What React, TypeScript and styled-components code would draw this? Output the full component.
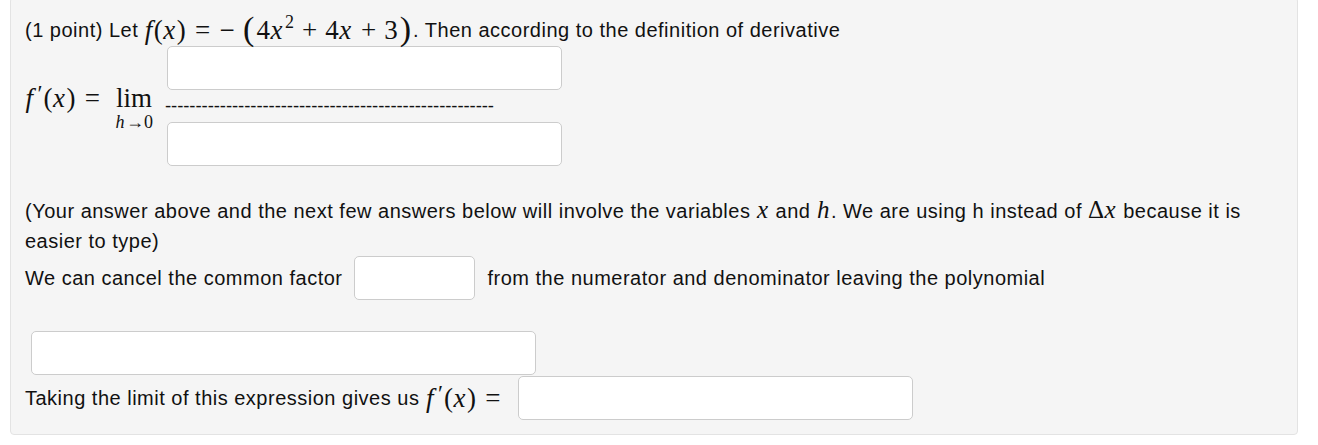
import React from "react";
import styled, { createGlobalStyle } from "styled-components";

const Global = createGlobalStyle`
  html, body { margin: 0; padding: 0; background: #ffffff; }
  body { font-family: "Liberation Sans", Arial, sans-serif; color: #111; }
`;

const Panel = styled.div`
  box-sizing: border-box;
  margin: -3px 0 0 10px;
  width: 1288px;
  background: #f5f5f5;
  border: 1px solid #e3e3e3;
  border-radius: 4px;
  padding: 17px 14px 14px 14px;
  font-size: 20px;
  letter-spacing: 0.5px;
  line-height: 30px;
`;

const Line = styled.div<{ h?: number }>`
  display: flex;
  align-items: center;
  white-space: nowrap;
  min-height: ${(p) => (p.h ? `${p.h}px` : "30px")};
`;

const Para = styled.div<{ mt?: number }>`
  margin-top: ${(p) => p.mt ?? 0}px;
  line-height: 30px;
`;

const M = styled.span<{ size?: number }>`
  font-family: "Liberation Serif", "DejaVu Serif", serif;
  font-size: ${(p) => p.size ?? 27}px;
  line-height: 1;
  letter-spacing: 0;
  white-space: nowrap;
`;

const InlineM = styled(M)`
  display: inline-block;
  margin: 0 6px;
`;

const V = styled.i`
  font-style: italic;
  padding: 0 1.5px 0 0.5px;
`;

const Op = styled.span<{ sp?: number }>`
  margin: 0 ${(p) => p.sp ?? 0.34}em;
`;

const Big = styled.span`
  font-size: 34px;
  line-height: 0;
  position: relative;
  top: 1px;
  margin: 0 2px;
`;

const Sup = styled.sup`
  font-size: 18px;
  line-height: 0;
  vertical-align: 0.6em;
  margin-left: 1px;
`;

const Prime = styled.span`
  font-size: 0.85em;
  position: relative;
  top: -0.25em;
  margin: 0 1px 0 3px;
`;

const Input = styled.div<{ w: number; ml?: number; mr?: number }>`
  box-sizing: border-box;
  flex: none;
  width: ${(p) => p.w}px;
  height: 44px;
  margin-left: ${(p) => p.ml ?? 0}px;
  margin-right: ${(p) => p.mr ?? 0}px;
  background: #ffffff;
  border: 1px solid #cccccc;
  border-radius: 5px;
`;

const FracRow = styled.div`
  display: flex;
  align-items: center;
  margin-top: 1px;
`;

const Label = styled.div`
  display: flex;
  align-items: baseline;
  margin-top: 4px;
  width: 142px;
  flex: none;
`;

const LimStack = styled.span`
  display: inline-flex;
  flex-direction: column;
  align-items: center;
  margin-left: 0.3em;
  line-height: 22px;
`;

const LimSub = styled.span`
  line-height: 16px;
  margin-top: 1px;
`;

const FracCol = styled.div`
  display: flex;
  flex-direction: column;
`;

const Dashes = styled.div`
  height: 32px;
  line-height: 32px;
  font-size: 18.6px;
  letter-spacing: -0.1px;
  white-space: nowrap;
  margin-left: -2px;
`;

const Gap = styled.div<{ h: number }>`
  height: ${(p) => p.h}px;
`;

export default function App() {
  return (
    <>
      <Global />
      <Panel>
        <Line>
          (1 point) Let&nbsp;
          <M>
            <V>f</V>(<V>x</V>)<Op>=</Op>−<Op sp={0.12} />
            <Big>(</Big>4<V>x</V>
            <Sup>2</Sup>
            <Op sp={0.3}>+</Op>4<V>x</V>
            <Op sp={0.3}>+</Op>3<Big>)</Big>
          </M>
          . Then according to the definition of derivative
        </Line>
        <FracRow>
          <Label>
            <M>
              <V>f</V>
              <Prime>′</Prime>(<V>x</V>)<Op>=</Op>
            </M>
            <LimStack>
              <M>lim</M>
              <LimSub>
                <M size={18}>
                  <V>h</V>→0
                </M>
              </LimSub>
            </LimStack>
          </Label>
          <FracCol>
            <Input w={395} />
            <Dashes>{"-".repeat(54)}</Dashes>
            <Input w={395} />
          </FracCol>
        </FracRow>
        <Para mt={30}>
          (Your answer above and the next few answers below will involve the variables
          <InlineM size={25}>
            <V>x</V>
          </InlineM>
          and
          <InlineM size={25} style={{ marginRight: 0 }}>
            <V>h</V>
          </InlineM>
          . We are using h instead of
          <InlineM size={25}>
            Δ<V>x</V>
          </InlineM>
          <span>because it is</span>
          <br />
          <span>easier to type)</span>
        </Para>
        <Line h={44}>
          We can cancel the common factor
          <Input w={121} ml={11} mr={13} />
          from the numerator and denominator leaving the polynomial
        </Line>
        <Gap h={31} />
        <Input w={505} ml={6} />
        <Line h={44} style={{ marginTop: 1 }}>
          Taking the limit of this expression gives us&nbsp;
          <M>
            <V>f</V>
            <Prime>′</Prime>(<V>x</V>)<Op>=</Op>
          </M>
          <Input w={395} ml={8} />
        </Line>
      </Panel>
    </>
  );
}
